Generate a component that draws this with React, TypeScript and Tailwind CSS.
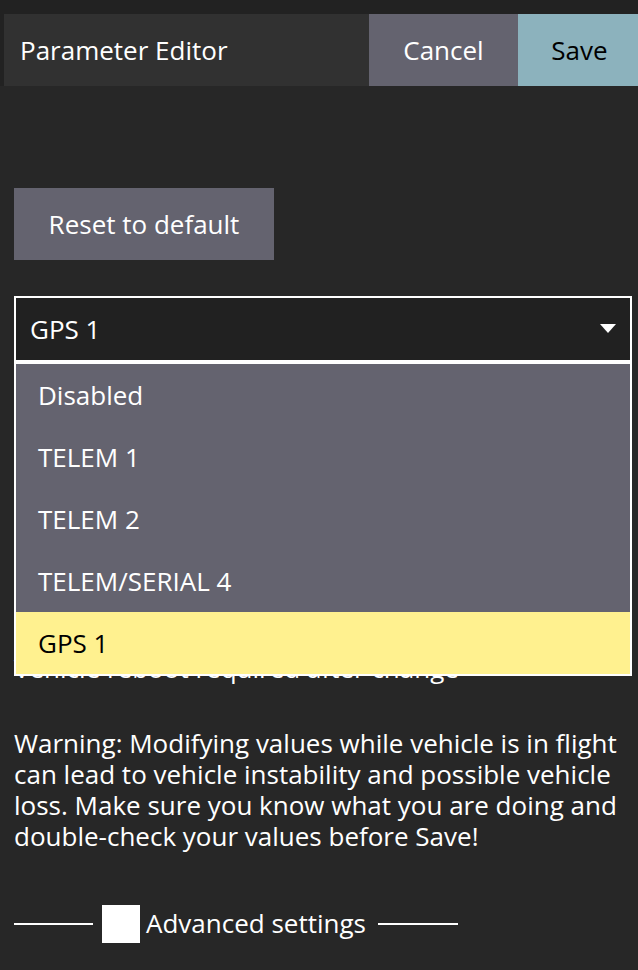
const options = ['Disabled', 'TELEM 1', 'TELEM 2', 'TELEM/SERIAL 4', 'GPS 1']

function App() {
  const selected = 'GPS 1'
  return (
    <main className="relative min-h-[970px] w-[638px] overflow-hidden bg-[#272727] font-['Open_Sans',sans-serif] text-[26px] text-white">
      <div className="flex h-[86px] bg-[#222222] pl-[4px] pt-[14px]">
        <div className="flex flex-1 items-center bg-[#313131] pl-[16px]">Parameter Editor</div>
        <button className="flex w-[149px] items-center justify-center bg-[#64636f]">Cancel</button>
        <button className="flex w-[120px] items-center justify-center bg-[#8cb2bd] pl-[3px] text-black">Save</button>
      </div>

      <div className="px-[14px]">
        <button className="mt-[102px] flex h-[72px] w-[260px] items-center justify-center bg-[#64636f]">
          Reset to default
        </button>

        <div className="relative -mr-[8px] mt-[36px]">
          <div className="flex h-[66px] items-center justify-between border-2 border-white bg-[#212121] pl-[14px] pr-[14px]">
            <span>{selected}</span>
            <svg width="16" height="10" viewBox="0 0 16 10" className="blur-[0.5px]">
              <polygon points="0,0 16,0 8,9" fill="white" />
            </svg>
          </div>

          <ul className="absolute left-0 right-0 top-full z-10 border-2 border-white">
            {options.map((o) => (
              <li
                key={o}
                className={
                  o === selected
                    ? 'flex h-[62px] items-center bg-[#fff18f] pl-[22px] text-black'
                    : 'flex h-[62px] items-center bg-[#64636f] pl-[22px]'
                }
              >
                {o}
              </li>
            ))}
          </ul>
        </div>

        <p className="mt-[291px] leading-[31px]">Vehicle reboot required after change</p>

        <p className="mt-[44px] leading-[31px]">
          Warning: Modifying values while vehicle is in flight can lead to vehicle instability and possible vehicle
          loss. Make sure you know what you are doing and double-check your values before Save!
        </p>

        <div className="mt-[52px] flex items-center">
          <div className="h-[2px] w-[79px] bg-white" />
          <div className="ml-[9px] h-[38px] w-[38px] bg-white" />
          <span className="ml-[6px]">Advanced settings</span>
          <div className="ml-[12px] h-[2px] w-[80px] bg-white" />
        </div>
      </div>
    </main>
  )
}

export default App
